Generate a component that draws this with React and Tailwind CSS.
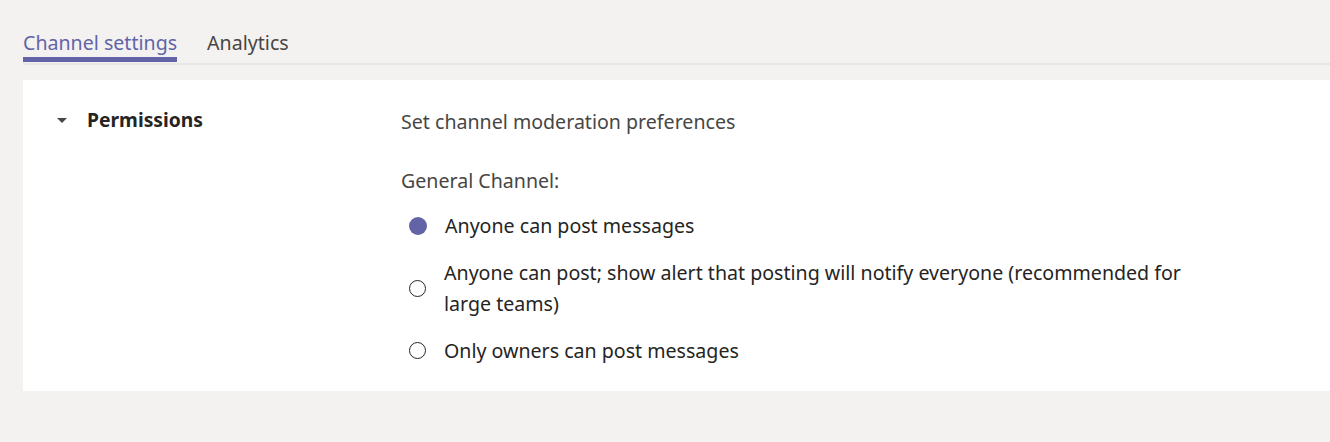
import React, { useState } from 'react';

const OPTIONS = [
  'Anyone can post messages',
  'Anyone can post; show alert that posting will notify everyone (recommended for large teams)',
  'Only owners can post messages',
];

export default function App() {
  const [selected, setSelected] = useState(0);

  return (
    <div className="min-h-[442px] bg-[#f3f2f1] pl-[23px] pt-[29px] font-['Noto_Sans',sans-serif] text-[#252423]">
      {/* Tabs */}
      <div className="flex gap-[30px] border-b-2 border-[#e9e7e5] pb-[1px]">
        <div className="flex flex-col">
          <span className="text-[19.6px] leading-[27px] text-[#6264a7]">Channel settings</span>
          <span className="mt-[1px] h-[5px] bg-[#6264a7]" />
        </div>
        <div className="flex flex-col">
          <span className="text-[19.6px] leading-[27px] text-[#484644]">Analytics</span>
        </div>
      </div>

      {/* Card */}
      <div className="mt-[15px] flex bg-white pt-[30px] pb-[25px]">
        <div className="flex w-[378px] items-start gap-[20px] pl-[34px]">
          <svg width="10" height="20" viewBox="0 0 10 20" className="shrink-0">
            <path d="M0 8h10l-5 5z" fill="#484644" />
          </svg>
          <span className="text-[19.3px] font-bold leading-[20px]">Permissions</span>
        </div>

        <div className="flex flex-col">
          <p className="text-[19.6px] leading-[24px] text-[#484644]">Set channel moderation preferences</p>
          <p className="mt-[35px] text-[19.6px] leading-[24px] text-[#484644]">General Channel:</p>
          <div className="mt-[17px] flex flex-col gap-[16px]">
            {OPTIONS.map((label, i) => (
              <button
                key={i}
                onClick={() => setSelected(i)}
                className="flex items-center gap-[18px] pl-[8px] text-left"
              >
                {selected === i ? (
                  <span className="h-[18px] w-[18px] shrink-0 rounded-full bg-[#6264a7]" />
                ) : (
                  <span className="h-[17px] w-[17px] shrink-0 rounded-full border border-[#252423]" />
                )}
                <span className="max-w-[760px] text-[19.6px] leading-[31px]">{label}</span>
              </button>
            ))}
          </div>
        </div>
      </div>
    </div>
  );
}
